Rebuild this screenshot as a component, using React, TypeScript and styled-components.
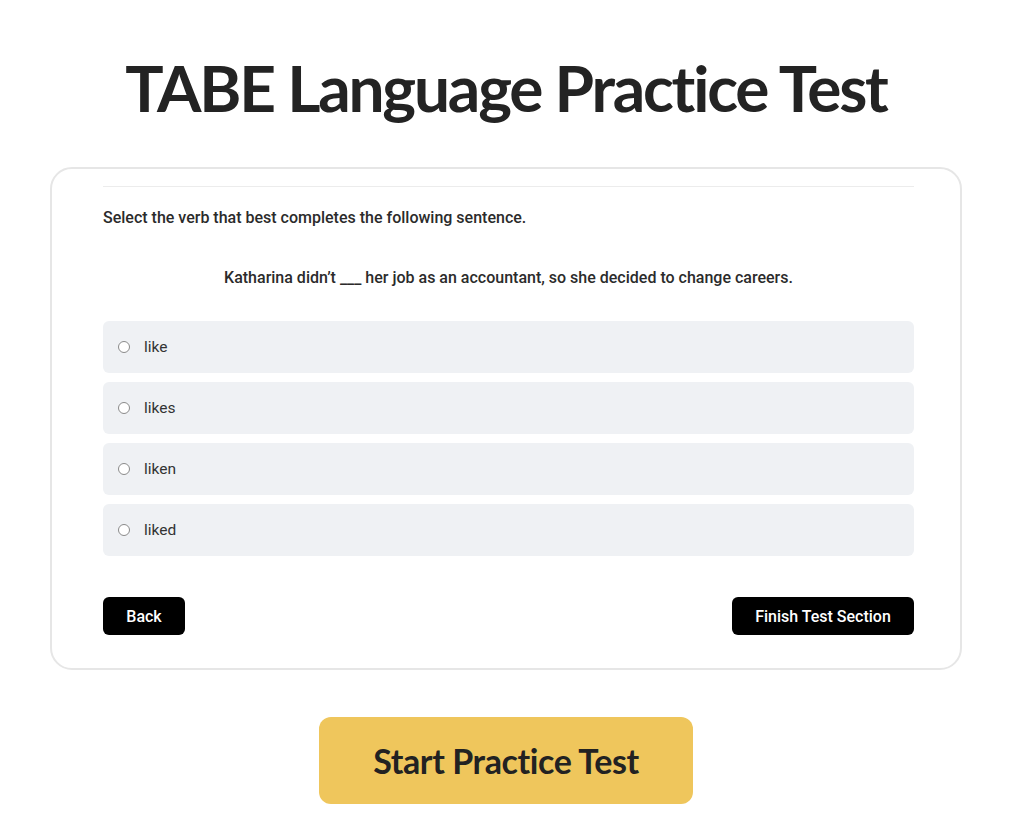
import React from "react";
import styled, { createGlobalStyle } from "styled-components";

const Global = createGlobalStyle`
  html, body {
    margin: 0;
    padding: 0;
    background: #ffffff;
  }
  body {
    font-family: Roboto, "Liberation Sans", Arial, sans-serif;
    color: #222;
  }
`;

const Page = styled.main`
  width: 1012px;
  min-height: 835px;
  display: flex;
  flex-direction: column;
  align-items: center;
  box-sizing: border-box;
  padding-top: 48px;
`;

const Title = styled.h1`
  margin: 0;
  font-family: Lato, "Open Sans", sans-serif;
  font-weight: 700;
  font-size: 64px;
  line-height: 80px;
  letter-spacing: -2.2px;
  color: #232323;
  text-align: center;
`;

const Card = styled.section`
  margin-top: 39px;
  width: 912px;
  box-sizing: border-box;
  border: 2px solid #e6e6e6;
  border-radius: 22px;
  padding: 17px 46px 33px 51px;
  display: flex;
  flex-direction: column;
`;

const Divider = styled.hr`
  margin: 0;
  border: none;
  height: 1px;
  background: #ececec;
`;

const Prompt = styled.p`
  margin: 21px 0 0;
  font-size: 16px;
  font-weight: 500;
  line-height: 19px;
  color: #2b2b2b;
`;

const Sentence = styled.p`
  margin: 41px 0 0;
  font-size: 16px;
  font-weight: 500;
  line-height: 19px;
  color: #2b2b2b;
  text-align: center;
`;

const Options = styled.ul`
  list-style: none;
  margin: 34px 0 0;
  padding: 0;
  display: flex;
  flex-direction: column;
  gap: 9px;
`;

const Option = styled.li`
  height: 52px;
  border-radius: 6px;
  background: #eff1f4;
  display: flex;
  align-items: center;
  padding-left: 15px;
  gap: 14px;
  font-size: 15.5px;
  color: #333;
  cursor: pointer;
`;

const Radio = styled.span`
  width: 10px;
  height: 10px;
  border-radius: 50%;
  border: 1.5px solid #8a8a8a;
  background: #fff;
  flex-shrink: 0;
`;

const Actions = styled.div`
  margin-top: 41px;
  display: flex;
  justify-content: space-between;
`;

const DarkButton = styled.button<{ $width: number }>`
  width: ${(p) => p.$width}px;
  height: 38px;
  border: none;
  border-radius: 6px;
  background: #000;
  color: #fff;
  font-family: Roboto, "Liberation Sans", sans-serif;
  font-size: 16px;
  font-weight: 500;
  cursor: pointer;
`;

const StartButton = styled.button`
  margin-top: 47px;
  width: 374px;
  height: 87px;
  border: none;
  border-radius: 12px;
  background: #efc65c;
  color: #222;
  font-family: Lato, "Open Sans", sans-serif;
  font-weight: 700;
  font-size: 34px;
  letter-spacing: -0.4px;
  cursor: pointer;
`;

const answers = ["like", "likes", "liken", "liked"];

export default function App() {
  return (
    <>
      <Global />
      <Page>
        <Title>TABE Language Practice Test</Title>
        <Card>
          <Divider />
          <Prompt>Select the verb that best completes the following sentence.</Prompt>
          <Sentence>
            Katharina didn’t ___ her job as an accountant, so she decided to change careers.
          </Sentence>
          <Options>
            {answers.map((a) => (
              <Option key={a}>
                <Radio />
                {a}
              </Option>
            ))}
          </Options>
          <Actions>
            <DarkButton $width={82}>Back</DarkButton>
            <DarkButton $width={182}>Finish Test Section</DarkButton>
          </Actions>
        </Card>
        <StartButton>Start Practice Test</StartButton>
      </Page>
    </>
  );
}
